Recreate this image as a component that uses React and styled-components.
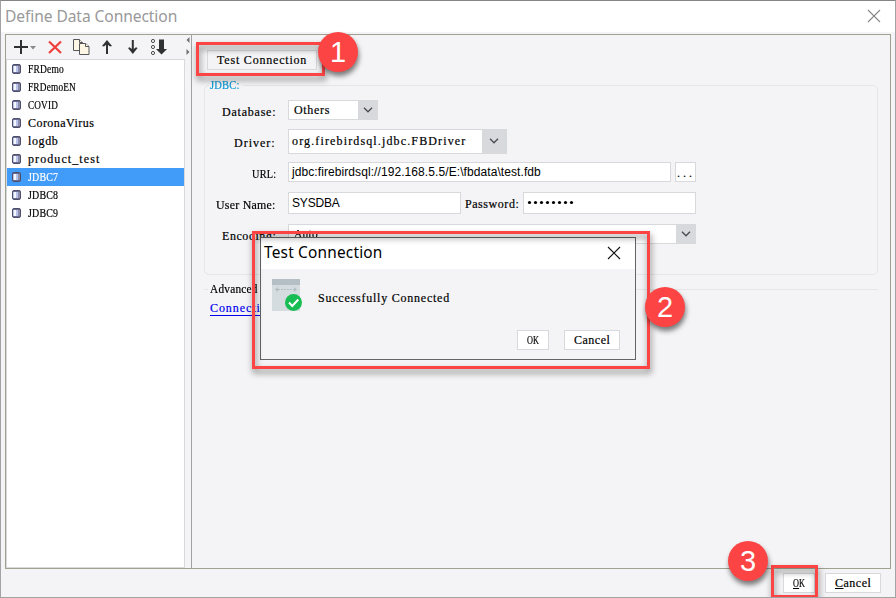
import React, { useLayoutEffect, useRef, useState } from 'react';
import styled, { createGlobalStyle, css } from 'styled-components';

const Global = createGlobalStyle`
  * { box-sizing: border-box; }
  body { margin: 0; overflow: hidden; background: #f4f4f6; }
`;

const song = css`
  font-family: "Liberation Serif", serif;
  font-size: 12px;
  line-height: 14px;
  -webkit-text-stroke: 0.2px currentColor;
`;

const plainStroke = css`
  -webkit-text-stroke: 0;
`;

const FitBox = styled.span`
  display: block;
  flex: none;
  text-align: left;
  white-space: pre;
`;

const FitText = styled.span`
  display: inline-block;
  transform-origin: 0 50%;
`;

const MIN_TRACKING = 0.25;

/* Spreads a text over a fixed width: tracking for narrow text, condensing for wide text. */
function Fit({ width, text, children }) {
  const ref = useRef(null);
  const [fit, setFit] = useState({ spacing: 0, scale: 1 });
  const target = width ?? text.length * 6;
  const floor = width ? -1 : MIN_TRACKING;
  useLayoutEffect(() => {
    const el = ref.current;
    el.style.letterSpacing = '0px';
    const natural = el.offsetWidth;
    const spacing = Math.max(floor, (target - natural) / text.length);
    const scale = Math.min(1, target / (natural + spacing * text.length));
    el.style.letterSpacing = `${spacing}px`;
    setFit({ spacing, scale });
  }, [target, text, floor]);
  return (
    <FitBox style={{ width: target }}>
      <FitText
        ref={ref}
        style={{ letterSpacing: `${fit.spacing}px`, transform: fit.scale < 1 ? `scaleX(${fit.scale})` : 'none' }}
      >
        {children ?? text}
      </FitText>
    </FitBox>
  );
}

const Window = styled.div`
  ${song}
  position: relative;
  display: flex;
  flex-direction: column;
  width: 896px;
  height: 598px;
  overflow: hidden;
  color: #000;
  background: #f4f4f6;
  border: 1px solid #a3a3a6;
  border-top-color: #858588;
`;

const TitleBar = styled.header`
  ${plainStroke}
  display: flex;
  align-items: center;
  justify-content: space-between;
  flex: none;
  height: 31px;
  padding: 0 14px 2px 4px;
  background: #fff;
  color: #999;
  font: 15.6px/22px "Noto Sans", sans-serif;
`;

const Body = styled.main`
  display: flex;
  flex: none;
  height: 535px;
  margin: 2px 4px 0 4px;
  border: 1px solid #a0a18f;
`;

const Sidebar = styled.aside`
  width: 179px;
  display: flex;
  flex-direction: column;
`;

const Toolbar = styled.div`
  height: 25px;
  border-bottom: 1px solid #d8d9dd;
`;

const List = styled.ul`
  flex: 1;
  margin: 0;
  padding: 0;
  list-style: none;
  background: #fff;
  border: solid #d8d9dd;
  border-width: 0 1px 1px 1px;
`;

const Item = styled.li`
  display: flex;
  align-items: center;
  gap: 7px;
  height: 18px;
  padding-left: 5px;
  color: ${(p) => (p.$selected ? '#fff' : '#000')};
  background: ${(p) => (p.$selected ? '#419bf9' : 'transparent')};
`;

const Splitter = styled.div`
  width: 7px;
  border-right: 1px solid #a2a2a5;
`;

const Content = styled.section`
  flex: 1;
  display: flex;
  flex-direction: column;
  align-items: flex-start;
  padding: 15px 12px 0 12px;
`;

const Button = styled.button`
  ${song}
  display: flex;
  align-items: center;
  justify-content: center;
  flex: none;
  width: ${(p) => p.$w}px;
  height: ${(p) => p.$h ?? 20}px;
  margin: 0;
  padding: 0;
  color: #000;
  background: ${(p) => (p.$plain ? '#f4f4f6' : '#fff')};
  border: 1px solid #d8d9dd;
`;

const Tester = styled.div`
  margin-left: 3px;
`;

const Group = styled.fieldset`
  width: 674px;
  height: 190px;
  margin: 15px 0 0;
  padding: 15px 0 0;
  min-width: 0;
  border: 1px solid #e6e6e8;
  border-radius: 5px;
  display: flex;
  flex-direction: column;
`;

const Legend = styled.div`
  display: flex;
  width: 34px;
  height: 14px;
  margin: -23px 0 0 4px;
  padding-left: 1px;
  background: #f4f4f6;
  color: #0b97d3;
`;

const Rows = styled.div`
  display: flex;
  flex-direction: column;
  gap: 7px;
  margin-top: 6px;
`;

const Row = styled.div`
  display: flex;
  align-items: center;
  height: 24px;
`;

const Label = styled.label`
  display: flex;
  justify-content: flex-end;
  flex: none;
  width: 71px;
  margin-right: 12px;
  padding-top: 3px;
`;

const PasswordLabel = styled(Label)`
  width: 56px;
  margin: 0 4px 0 2px;
  padding-top: 1px;
`;

const Field = styled.div`
  ${plainStroke}
  display: flex;
  align-items: center;
  flex: none;
  width: ${(p) => p.$w}px;
  height: ${(p) => p.$h ?? 20}px;
  padding-left: 3px;
  background: #fff;
  border: 1px solid #d8d9dd;
  font: 12px/14px "Liberation Sans", Arial, sans-serif;
`;

const Select = styled.div`
  display: flex;
  align-items: center;
  justify-content: space-between;
  flex: none;
  width: ${(p) => p.$w}px;
  height: ${(p) => p.$h ?? 20}px;
  padding-left: ${(p) => p.$pad ?? 5}px;
  background: #fff;
  border: 1px solid #d8d9dd;
`;

const Arrow = styled.span`
  display: flex;
  align-items: center;
  justify-content: center;
  align-self: stretch;
  width: ${(p) => p.$w ?? 19}px;
  background: #d8d9dd;
`;

const More = styled.div`
  display: flex;
  margin-left: 4px;
`;

const Dots = styled.span`
  display: flex;
  gap: 3px;
  padding: 1px 2px 0 0;
`;

const Advanced = styled.div`
  display: flex;
  align-items: center;
  width: 674px;
  height: 14px;
  margin-top: 7px;
  gap: 2px;
  &::before { content: ''; width: 4px; height: 1px; background: #e6e6e8; }
  &::after { content: ''; flex: 1; height: 1px; background: #e6e6e8; }
`;

const Link = styled.a`
  display: flex;
  height: 15px;
  margin: 5px 0 0 6px;
  color: #0000f0;
  border-bottom: 1px solid #0000f0;
`;

const Footer = styled.footer`
  display: flex;
  justify-content: flex-end;
  gap: 10px;
  padding: 4px 14px 0 0;
`;

const Dialog = styled.div`
  position: absolute;
  left: 259px;
  top: 236px;
  width: 376px;
  height: 123px;
  background: #f4f4f6;
  border: 1px solid #636468;
`;

const DialogTitle = styled.div`
  ${plainStroke}
  display: flex;
  align-items: center;
  justify-content: space-between;
  height: 31px;
  padding: 0 14px 1px 3px;
  background: #fff;
  font: 15.4px/22px "Noto Sans", sans-serif;
`;

const Message = styled.div`
  display: flex;
  gap: 15px;
  padding: 10px 0 0 11px;
  height: 61px;
`;

const MessageText = styled.div`
  padding-top: 12px;
`;

const DialogButtons = styled.div`
  display: flex;
  justify-content: flex-end;
  gap: 15px;
  padding-right: 15px;
`;

const Frame = styled.div`
  position: absolute;
  left: ${(p) => p.$x - 1}px;
  top: ${(p) => p.$y - 1}px;
  width: ${(p) => p.$w}px;
  height: ${(p) => p.$h}px;
  border: 3px solid #fc4444;
  filter: drop-shadow(1px 4px 3px rgba(0, 0, 0, 0.5));
  pointer-events: none;
`;

const Step = styled.div`
  ${plainStroke}
  position: absolute;
  left: ${(p) => p.$x - 1}px;
  top: ${(p) => p.$y - 1}px;
  display: flex;
  align-items: center;
  justify-content: center;
  width: 40px;
  height: 40px;
  border-radius: 50%;
  background: #fc4444;
  color: #fff;
  font: 29px/40px "Liberation Sans", Arial, sans-serif;
  box-shadow: 1px 4px 5px rgba(0, 0, 0, 0.5);
`;

const Drawing = styled.svg`
  display: block;
  flex: none;
`;

const Close = ({ color }) => (
  <Drawing width="14" height="14" viewBox="0 0 14 14" stroke={color} strokeWidth="1.1">
    <path d="M1 1l12 12M13 1L1 13" />
  </Drawing>
);

const Chevron = () => (
  <Drawing width="10" height="6" viewBox="0 0 10 6" fill="none" stroke="#4a4b50" strokeWidth="1.3">
    <path d="M1 .8l4 4 4-4" />
  </Drawing>
);

const Database = () => (
  <Drawing width="9" height="10" viewBox="0 0 9 10">
    <rect x=".5" y=".5" width="8" height="9" rx="1.4" fill="#6a6d91" stroke="#4e4e68" />
    <path d="M1 2h5v6H1z" fill="#b9c2e8" />
    <path d="M2 2h2v6H2z" fill="#f5f7ff" />
    <path d="M6 3h2M6 5h2M6 7h2" stroke="#c2c2d4" strokeWidth=".8" />
  </Drawing>
);

const ToolbarIcons = () => (
  <Drawing width="179" height="24" viewBox="6 35 179 24" fill="none">
    <path d="M14 47h14M21 40v14" stroke="#303133" strokeWidth="2" />
    <path d="M30 46h6l-3 3.5z" fill="#88898c" />
    <path d="M49 41.5l12 11.5M61 41.5L49 53" stroke="#ee3f3a" strokeWidth="2.2" />
    <g stroke="#55565a" fill="#fdf6e4">
      <path d="M73.5 39.5h6l3 3v8h-9z" />
      <path d="M79.5 39.5v3h3" />
      <path d="M79.5 43.5h6l3.500 3v8h-9.500z" />
      <path d="M85.5 43.5v3h3.500" />
    </g>
    <path d="M107 54V42.5" stroke="#303133" strokeWidth="2" />
    <path d="M102 46l5-6 5 6-2 .5-3-2.5-3 2.5z" fill="#303133" />
    <path d="M132.8 40v11" stroke="#303133" strokeWidth="2" />
    <path d="M128 48l4.800 6 4.800-6-1.600-.8-3.200 2.600-3.200-2.600z" fill="#303133" />
    <g stroke="#4d4e52" strokeWidth="1">
      <circle cx="153" cy="41" r="1.6" />
      <circle cx="153" cy="47" r="1.6" />
      <circle cx="153" cy="53" r="1.6" />
    </g>
    <path d="M159 39.5h5V49h3l-5.5 5.5L156 49h3z" fill="#303133" />
  </Drawing>
);

const SplitterIcons = () => (
  <Drawing width="6" height="24" viewBox="0 0 6 24" fill="#707174">
    <path d="M4.5 2v6L1.5 5zM1.5 14v6l3-3z" />
  </Drawing>
);

const SuccessIcon = () => (
  <Drawing width="31" height="33" viewBox="0 0 31 33">
    <path d="M0 0h28v32H0z" fill="#d5dce0" />
    <path d="M0 0h28v6H0z" fill="#b3bec5" />
    <path d="M6 10.5h16" stroke="#b3bec5" strokeDasharray="2 1" />
    <path d="M3 10.5l3-2.500v5zM25 10.5L22 8v5z" fill="#b3bec5" />
    <circle cx="21.5" cy="23.5" r="8.5" fill="#17bd52" />
    <path d="M17 23.5l3.300 3.500 6-6.500" fill="none" stroke="#fff" strokeWidth="2" />
  </Drawing>
);

const Bullets = () => (
  <Drawing width="50" height="6" viewBox="0 0 50 6" role="img" aria-label="Password">
    {Array.from({ length: 8 }, (_, i) => <circle key={i} cx={2.5 + i * 6} cy="2.5" r="1.6" fill="#000" />)}
  </Drawing>
);

const connections = ['FRDemo', 'FRDemoEN', 'COVID', 'CoronaVirus', 'logdb', 'product_test', 'JDBC7', 'JDBC8', 'JDBC9'];

export default function App() {
  return (
    <Window>
      <Global />
      <TitleBar>
        <Fit width={172} text="Define Data Connection" />
        <Close color="#888" />
      </TitleBar>
      <Body>
        <Sidebar>
          <Toolbar><ToolbarIcons /></Toolbar>
          <List>
            {connections.map((name) => (
              <Item key={name} $selected={name === 'JDBC7'}><Database /><Fit text={name} /></Item>
            ))}
          </List>
        </Sidebar>
        <Splitter><SplitterIcons /></Splitter>
        <Content>
          <Tester><Button $w={110} $plain><Fit text="Test Connection" /></Button></Tester>
          <Group>
            <Legend><Fit text="JDBC:" /></Legend>
            <Rows>
              <Row>
                <Label><Fit text="Database:" /></Label>
                <Select $w={90}><Fit text="Others" /><Arrow><Chevron /></Arrow></Select>
              </Row>
              <Row>
                <Label><Fit text="Driver:" /></Label>
                <Select $w={219} $h={25} $pad={3}><Fit text="org.firebirdsql.jdbc.FBDriver" /><Arrow $w={24}><Chevron /></Arrow></Select>
              </Row>
              <Row>
                <Label><Fit text="URL:" /></Label>
                <Field $w={383}><Fit width={249} text={'jdbc:firebirdsql://192.168.5.5/E:\\fbdata\\test.fdb'} /></Field>
                <More><Button $w={21}><Dots><span>.</span><span>.</span><span>.</span></Dots></Button></More>
              </Row>
              <Row>
                <Label><Fit text="User Name:" /></Label>
                <Field $w={173} $h={22}><Fit width={48} text="SYSDBA" /></Field>
                <PasswordLabel><Fit text="Password:" /></PasswordLabel>
                <Field $w={173} $h={22}><Bullets /></Field>
              </Row>
              <Row>
                <Label><Fit text="Encoding:" /></Label>
                <Select $w={408}><Fit text="Auto" /><Arrow><Chevron /></Arrow></Select>
              </Row>
            </Rows>
          </Group>
          <Advanced><Fit text="Advanced" /></Advanced>
          <Link><Fit text="Connection Pool Properties" /></Link>
        </Content>
      </Body>
      <Footer>
        <Button $w={32}><Fit text="OK"><u>O</u>K</Fit></Button>
        <Button $w={56}><Fit text="Cancel"><u>C</u>ancel</Fit></Button>
      </Footer>

      <Dialog>
        <DialogTitle><Fit width={119} text="Test Connection" /><Close color="#111" /></DialogTitle>
        <Message><SuccessIcon /><MessageText><Fit text="Successfully Connected" /></MessageText></Message>
        <DialogButtons>
          <Button $w={32}><Fit text="OK" /></Button>
          <Button $w={56}><Fit text="Cancel" /></Button>
        </DialogButtons>
      </Dialog>

      <Frame $x={196} $y={42} $w={129} $h={34} />
      <Frame $x={252} $y={231} $w={398} $h={138} />
      <Frame $x={771} $y={565} $w={47} $h={33} />
      <Step $x={318} $y={32}>1</Step>
      <Step $x={645} $y={287}>2</Step>
      <Step $x={728} $y={541}>3</Step>
    </Window>
  );
}
